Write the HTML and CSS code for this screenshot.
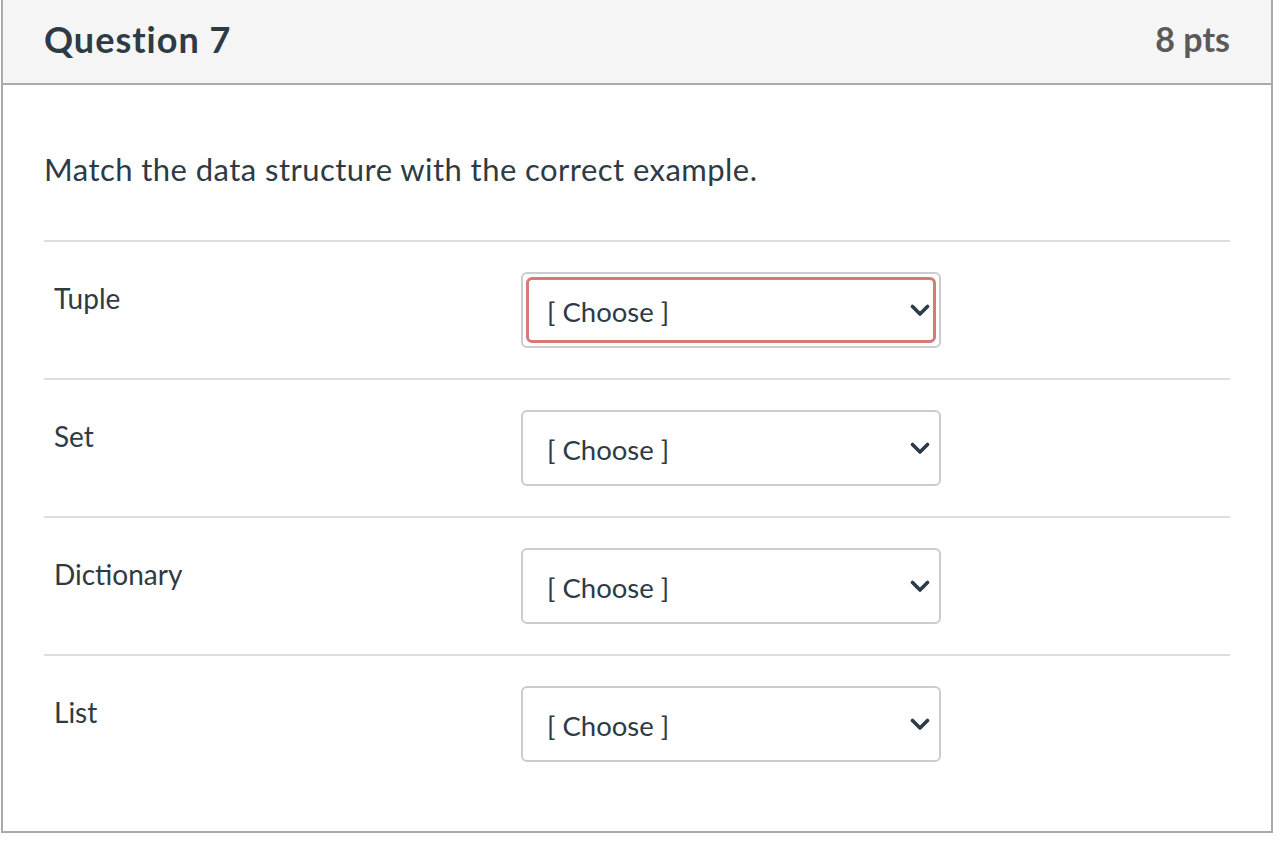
FILE: index.html
```html
<!DOCTYPE html>
<html lang="en">
<head>
<meta charset="utf-8">
<title>Question 7</title>
<link rel="stylesheet" href="styles.css">
</head>
<body>
<div class="question">
  <div class="question-header">
    <h2 class="question-title">Question 7</h2>
    <div class="question-points">8 pts</div>
  </div>
  <div class="question-body">
    <p class="question-text">Match the data structure with the correct example.</p>
    <div class="match-list">
      <div class="match-row">
        <div class="match-label">Tuple</div>
        <div class="select-wrap">
          <div class="select focused"><span class="select-text">[ Choose ]</span>
            <svg class="chevron" viewBox="0 0 20 13" width="20" height="13"><path d="M2.5 2.5 L10 10 L17.5 2.5" fill="none" stroke="#2d3b45" stroke-width="3.6" stroke-linecap="round" stroke-linejoin="round"/></svg>
          </div>
        </div>
      </div>
      <div class="match-row">
        <div class="match-label">Set</div>
        <div class="select-wrap">
          <div class="select"><span class="select-text">[ Choose ]</span>
            <svg class="chevron" viewBox="0 0 20 13" width="20" height="13"><path d="M2.5 2.5 L10 10 L17.5 2.5" fill="none" stroke="#2d3b45" stroke-width="3.6" stroke-linecap="round" stroke-linejoin="round"/></svg>
          </div>
        </div>
      </div>
      <div class="match-row">
        <div class="match-label">Dictionary</div>
        <div class="select-wrap">
          <div class="select"><span class="select-text">[ Choose ]</span>
            <svg class="chevron" viewBox="0 0 20 13" width="20" height="13"><path d="M2.5 2.5 L10 10 L17.5 2.5" fill="none" stroke="#2d3b45" stroke-width="3.6" stroke-linecap="round" stroke-linejoin="round"/></svg>
          </div>
        </div>
      </div>
      <div class="match-row">
        <div class="match-label">List</div>
        <div class="select-wrap">
          <div class="select"><span class="select-text">[ Choose ]</span>
            <svg class="chevron" viewBox="0 0 20 13" width="20" height="13"><path d="M2.5 2.5 L10 10 L17.5 2.5" fill="none" stroke="#2d3b45" stroke-width="3.6" stroke-linecap="round" stroke-linejoin="round"/></svg>
          </div>
        </div>
      </div>
    </div>
  </div>
</div>
</body>
</html>
```
FILE: styles.css
```css
html, body {
  margin: 0;
  padding: 0;
  background: #ffffff;
}

body {
  font-family: Lato, "Open Sans", "Liberation Sans", sans-serif;
  color: #2d3b45;
}

.question {
  margin-left: 1px;
  width: 1268px;
  border: 2px solid #aaaaaa;
  border-top: none;
}

.question-header {
  height: 83px;
  background: #f5f5f5;
  border-bottom: 2px solid #aaaaaa;
  display: flex;
  align-items: center;
  justify-content: space-between;
  padding: 0 41px;
}

.question-title {
  margin: 0;
  font-size: 36px;
  font-weight: 700;
  letter-spacing: 1px;
  color: #2d3b45;
  line-height: 1;
  padding-bottom: 6px;
}

.question-points {
  font-size: 34px;
  font-weight: 700;
  color: #5a5a5a;
  line-height: 1;
  padding-bottom: 6px;
}

.question-body {
  padding: 0 41px 39px;
}

.question-text {
  margin: 0;
  padding-top: 66px;
  padding-bottom: 53px;
  font-size: 31px;
  letter-spacing: 0.45px;
  line-height: 36px;
}

.match-row {
  border-top: 2px solid #dddddd;
  display: flex;
  height: 136px;
}

.match-label {
  width: 467px;
  padding-left: 10px;
  padding-top: 40px;
  font-size: 28px;
  line-height: 32px;
}

.select-wrap {
  padding-top: 30px;
}

.select {
  position: relative;
  box-sizing: border-box;
  width: 420px;
  height: 76px;
  border: 2px solid #c7cdd1;
  border-radius: 6px;
  display: flex;
  align-items: center;
  padding-left: 24px;
  padding-top: 3px;
  font-size: 27.5px;
}

.select.focused {
  border-color: #cccccc;
}

.select.focused::after {
  content: "";
  position: absolute;
  top: 3px;
  left: 3px;
  right: 3px;
  bottom: 3px;
  border: 3px solid #d67a77;
  border-radius: 6px;
}

.select-text {
  color: #2d3b45;
}

.chevron {
  position: absolute;
  right: 9px;
  top: 50%;
  margin-top: -6px;
}
```
